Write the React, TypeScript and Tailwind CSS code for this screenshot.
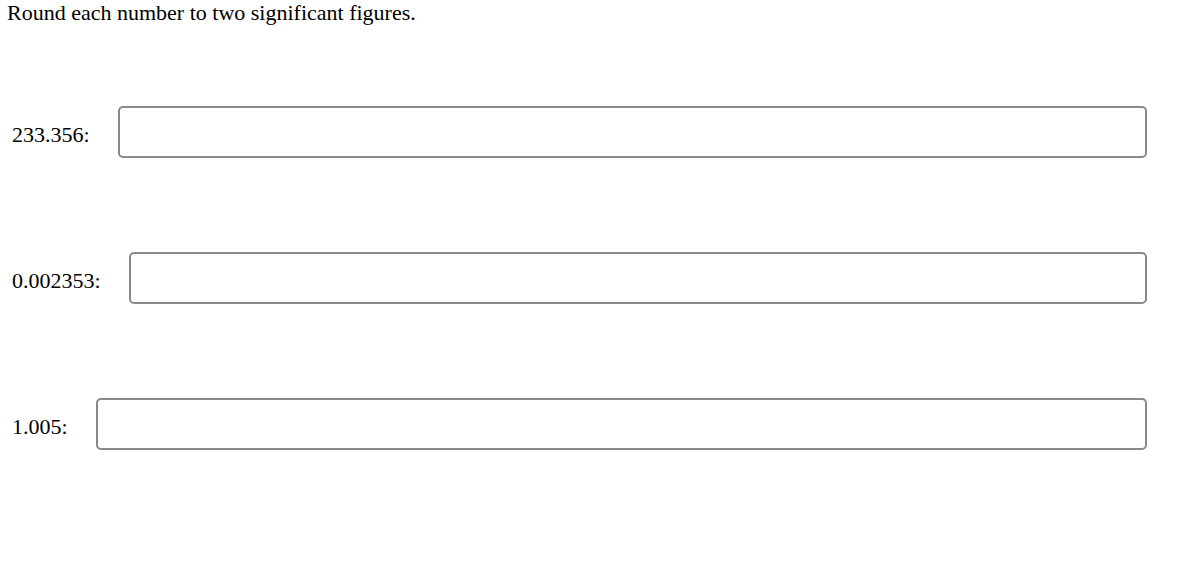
const rows = ['233.356:', '0.002353:', '1.005:'];

export default function App() {
  return (
    <div className="w-[1180px] h-[584px] bg-white text-black font-['Liberation_Serif',serif] text-[22px]">
      <p className="pl-[7px] leading-[25px]">Round each number to two significant figures.</p>
      <div className="mt-[81px] flex flex-col gap-[94px] pl-[12px] pr-[33px]">
        {rows.map((r) => (
          <div key={r} className="flex items-center gap-[28px]">
            <label className="pt-[5px] leading-[25px] whitespace-nowrap">{r}</label>
            <input
              type="text"
              className="flex-1 h-[52px] border-2 border-[#8a8a8a] rounded-[5px] px-3 outline-none"
            />
          </div>
        ))}
      </div>
    </div>
  );
}
